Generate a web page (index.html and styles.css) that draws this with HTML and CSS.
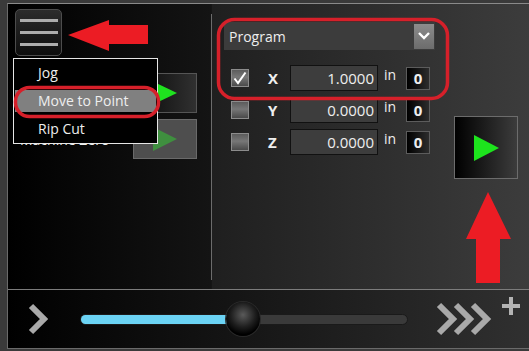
FILE: index.html
```html
<!DOCTYPE html>
<html lang="en">
<head>
  <meta charset="UTF-8" />
  <meta name="viewport" content="width=device-width, initial-scale=1.0"/>
  <title>Move to Point</title>
  <link rel="stylesheet" href="styles.css">
</head>
<body>

<div class="app">
  <div class="main">

    <div class="left-panel">
      <button class="menu-btn">
        <span></span><span></span><span></span>
      </button>
      <div class="action-row">
        <span class="action-label"></span>
        <button class="go-btn">
          <svg width="23" height="22" viewBox="0 0 23 22"><polygon points="0,0 23,11 0,22" fill="#1fe21f"/></svg>
        </button>
      </div>
      <div class="action-row second">
        <span class="action-label">Machine Zero</span>
        <button class="go-btn disabled">
          <svg width="24" height="24" viewBox="0 0 24 24"><polygon points="0,0 24,12 0,24" fill="#3f8f3f"/></svg>
        </button>
      </div>
    </div>

    <div class="divider"></div>

    <div class="right-panel">
      <div class="axis-panel">
        <div class="select">
          <span>Program</span>
          <span class="select-arrow">
            <svg width="12" height="8" viewBox="0 0 12 8"><polyline points="1,1 6,6 11,1" fill="none" stroke="#fff" stroke-width="2.4"/></svg>
          </span>
        </div>

        <div class="axis-row first">
          <span class="check">
            <svg width="14" height="14" viewBox="0 0 14 14"><polyline points="1.5,7.5 5,12 12.5,1.5" fill="none" stroke="#fff" stroke-width="2"/></svg>
          </span>
          <span class="axis-name">X</span>
          <span class="axis-input">1.0000</span>
          <span class="unit">in</span>
          <span class="zero-btn">0</span>
        </div>
        <div class="axis-row">
          <span class="check"></span>
          <span class="axis-name">Y</span>
          <span class="axis-input">0.0000</span>
          <span class="unit">in</span>
          <span class="zero-btn">0</span>
        </div>
        <div class="axis-row">
          <span class="check"></span>
          <span class="axis-name">Z</span>
          <span class="axis-input">0.0000</span>
          <span class="unit">in</span>
          <span class="zero-btn">0</span>
        </div>
      </div>

      <div class="go-col">
        <button class="go-btn big">
          <svg width="25" height="26" viewBox="0 0 25 26"><polygon points="0,0 25,13 0,26" fill="#1de41d"/></svg>
        </button>
      </div>
    </div>

  </div>

  <div class="bottom-bar">
    <svg class="chev-single" width="20" height="32" viewBox="0 0 20 32"><polyline points="3,3 16,16 3,29" fill="none" stroke="#a9a9a9" stroke-width="6"/></svg>
    <div class="slider">
      <div class="track"><div class="fill"></div></div>
      <div class="knob"></div>
    </div>
    <svg class="chev-triple" width="56" height="34" viewBox="0 0 56 34">
      <polyline points="3,3 17,17 3,31" fill="none" stroke="#a9a9a9" stroke-width="6"/>
      <polyline points="20,3 34,17 20,31" fill="none" stroke="#a9a9a9" stroke-width="6"/>
      <polyline points="37,3 51,17 37,31" fill="none" stroke="#a9a9a9" stroke-width="6"/>
    </svg>
    <svg class="plus" width="20" height="20" viewBox="0 0 20 20">
      <line x1="10" y1="1" x2="10" y2="19" stroke="#b3b3b3" stroke-width="4"/>
      <line x1="1" y1="10" x2="19" y2="10" stroke="#b3b3b3" stroke-width="4"/>
    </svg>
  </div>
</div>

<!-- popup opened from the menu button -->
<div class="popup-menu">
  <div class="menu-item">Jog</div>
  <div class="menu-item selected">Move to Point</div>
  <div class="menu-item">Rip Cut</div>
</div>

<!-- red callouts drawn over the screen -->
<svg class="annotations" width="529" height="351" viewBox="0 0 529 351">
  <polygon points="68,35 109,20 109,25 148,25 148,44 109,44 109,51" fill="#ec1c24"/>
  <polygon points="488,192 511,239 500,239 500,283 476,283 476,239 466,239" fill="#ec1c24"/>
  <rect x="218.5" y="19.5" width="229" height="79" rx="16" fill="none" stroke="#d6202a" stroke-width="3.5"/>
  <rect x="15.5" y="87.5" width="143" height="29" rx="14" fill="none" stroke="#d6202a" stroke-width="3.5"/>
</svg>

</body>
</html>
```

FILE: styles.css
```css
body {
  margin: 0;
  padding-top: 3px;
  width: 529px;
  height: 351px;
  box-sizing: border-box;
  overflow: hidden;
  background-color: #3a3a3a;
  font-family: "Open Sans", "Noto Sans", sans-serif;
  color: #eee;
}

button {
  padding: 0;
  font-family: inherit;
  cursor: pointer;
}

.app {
  margin-left: 7px;
  border-top: 1px solid #8a8a8a;
  border-left: 1px solid #6a6a6a;
}

.main {
  display: flex;
  height: 285px;
  background-color: #161616;
}

/* left side: menu button and actions */
.left-panel {
  width: 203px;
  background: linear-gradient(to right, #000, #141414);
  display: flex;
  flex-direction: column;
}

.menu-btn {
  width: 47px;
  height: 47px;
  margin: 5px 0 0 7px;
  border: 1px solid #4c4c4c;
  border-radius: 5px;
  background: linear-gradient(#2c2c2c, #0d0d0d);
  display: flex;
  flex-direction: column;
  justify-content: center;
  align-items: center;
  gap: 9px;
}

.menu-btn span {
  width: 38px;
  height: 3px;
  background-color: #adadad;
}

.action-row {
  display: flex;
  align-items: center;
  justify-content: space-between;
  margin-top: 17px;
}

.action-row.second {
  margin-top: 6px;
}

.action-label {
  margin-left: 12px;
  font-size: 14px;
}

.go-btn {
  width: 64px;
  height: 40px;
  margin-right: 14px;
  border: 1px solid #555;
  background: linear-gradient(to right, #080808, #303030);
  display: flex;
  align-items: center;
  justify-content: center;
}

.go-btn.disabled {
  background: #4e4e4e;
  border-color: #6a6a6a;
}

.divider {
  width: 1px;
  margin: 10px 0 9px;
  background-color: #6c6c6c;
}

/* right side: axis entry */
.right-panel {
  flex: 1;
  display: flex;
  background: linear-gradient(to right, #1f1f1f, #3c3c3c);
}

.axis-panel {
  width: 211px;
  padding: 18px 0 0 12px;
}

.select {
  height: 28px;
  padding-left: 5px;
  background-color: #3c3c3c;
  display: flex;
  align-items: center;
  justify-content: space-between;
  font-size: 14px;
}

.select-arrow {
  width: 20px;
  height: 25px;
  margin-right: 1px;
  background: linear-gradient(#8c8c8c, #6c6c6c);
  display: flex;
  align-items: center;
  justify-content: center;
}

.axis-row {
  height: 32px;
  padding-left: 7px;
  display: flex;
  align-items: center;
}

.axis-row.first {
  margin-top: 12px;
}

.check {
  width: 18px;
  height: 18px;
  box-sizing: border-box;
  margin-right: 19px;
  border: 1px solid #8c8c8c;
  background: linear-gradient(#5c5c5c, #777 45%, #4a4a4a);
  display: flex;
  align-items: center;
  justify-content: center;
}

.axis-name {
  width: 22px;
  font-size: 15px;
  font-weight: bold;
}

.axis-input {
  width: 88px;
  height: 26px;
  box-sizing: border-box;
  padding-right: 3px;
  border: 1px solid #111;
  background-color: #3d3d3d;
  text-align: right;
  font-size: 15px;
  line-height: 24px;
}

.unit {
  width: 22px;
  align-self: flex-start;
  margin: 5px 0 0 6px;
  font-size: 14px;
  line-height: 16px;
}

.zero-btn {
  width: 24px;
  height: 23px;
  box-sizing: border-box;
  border: 1px solid #5c5c5c;
  background: linear-gradient(to right, #000, #2c2c2c);
  font-size: 15px;
  font-weight: bold;
  display: flex;
  align-items: center;
  justify-content: center;
}

.go-col {
  margin-left: auto;
  margin-right: 11px;
  padding-top: 112px;
}

.go-btn.big {
  width: 64px;
  height: 63px;
  margin: 0;
  border-color: #6c6c6c;
  background: linear-gradient(to right, #000, #3c3c3c);
}

/* speed bar */
.bottom-bar {
  height: 58px;
  border-top: 1px solid #7c7c7c;
  border-bottom: 1px solid #6a6a6a;
  background: linear-gradient(to right, #000, #303030);
  display: flex;
  align-items: center;
}

.chev-single {
  margin-left: 20px;
}

.slider {
  position: relative;
  width: 328px;
  height: 34px;
  margin-left: 32px;
  display: flex;
  align-items: center;
}

.track {
  width: 100%;
  height: 11px;
  box-sizing: border-box;
  border: 1px solid #1a1a1a;
  border-radius: 6px;
  background-color: #3a3a3a;
  overflow: hidden;
}

.fill {
  width: 163px;
  height: 100%;
  background-color: #6bd3f4;
}

.knob {
  position: absolute;
  left: 146px;
  top: 0;
  width: 34px;
  height: 34px;
  border-radius: 50%;
  background: radial-gradient(circle at 50% 38%, #5a5a5a 0%, #1e1e1e 45%, #000 72%);
  box-shadow: 0 0 0 1px #2a2a2a;
}

.chev-triple {
  margin-left: 28px;
}

.plus {
  align-self: flex-start;
  margin: 6px 0 0 9px;
}

/* popup menu */
.popup-menu {
  position: absolute;
  left: 13px;
  top: 58px;
  width: 145px;
  height: 86px;
  box-sizing: border-box;
  border: 1px solid #e6e6e6;
  background-color: #000;
}

.menu-item {
  height: 28px;
  padding-left: 24px;
  font-size: 14px;
  line-height: 28px;
}

.menu-item.selected {
  height: 22px;
  margin: 3px 1px;
  padding-left: 23px;
  line-height: 22px;
  background-color: #808080;
}

.annotations {
  position: absolute;
  left: 0;
  top: 0;
  pointer-events: none;
}
```
